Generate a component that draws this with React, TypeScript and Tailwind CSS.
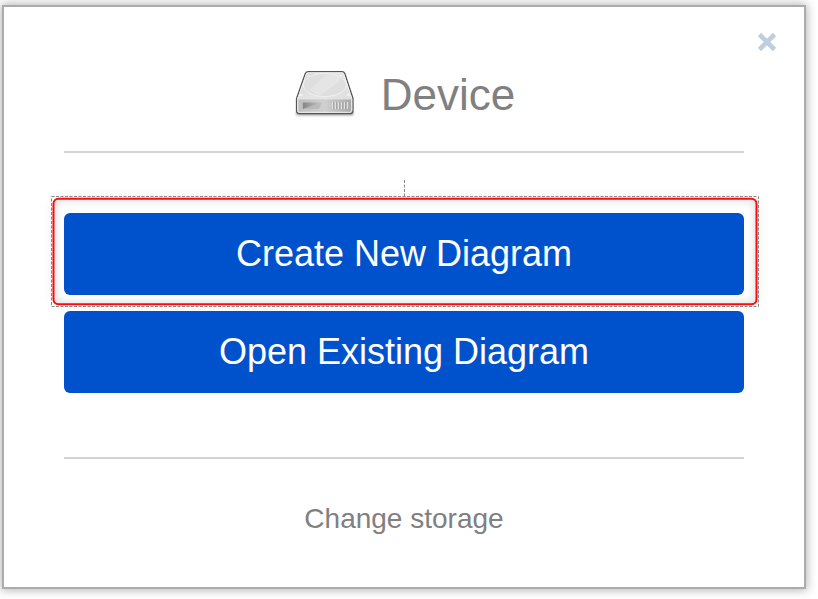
import type { ReactNode } from "react";

type StorageButtonProps = {
  children: ReactNode;
  highlighted?: boolean;
};

function DriveIcon() {
  return (
    <svg width="62" height="54" viewBox="-1.8 -1.5 62 54" fill="none">
      <defs>
        <linearGradient id="driveTop" x1="0" y1="0" x2="1" y2="1">
          <stop offset="0" stopColor="#d6d6d6" />
          <stop offset="0.5" stopColor="#e6e6e6" />
          <stop offset="1" stopColor="#d6d6d6" />
        </linearGradient>
        <linearGradient id="driveFront" x1="0" y1="0" x2="1" y2="0">
          <stop offset="0" stopColor="#bdbdbd" />
          <stop offset="0.5" stopColor="#d0d0d0" />
          <stop offset="1" stopColor="#a8a8a8" />
        </linearGradient>
        <linearGradient id="driveSlot" x1="0" y1="0" x2="1" y2="0">
          <stop offset="0" stopColor="#858585" />
          <stop offset="1" stopColor="#c8c8c8" />
        </linearGradient>
        <filter id="driveShadow" x="-10%" y="-100%" width="120%" height="300%">
          <feGaussianBlur stdDeviation="1.1" />
        </filter>
      </defs>
      <rect x="1" y="41" width="58" height="4" rx="2" fill="#000" opacity="0.35" filter="url(#driveShadow)" />
      <path
        d="M10.500 3Q11.200 1.200 13.500 1.200H47Q49.300 1.200 50 3L57.900 27Q58.200 28 58.200 29V40.200Q58.200 43 55.400 43H4.600Q1.700 43 1.700 40.200V29Q1.700 28 2.100 27Z"
        fill="url(#driveTop)"
        stroke="#555"
        strokeWidth="1.300"
      />
      <path d="M2.500 28.500H57.400V39.700Q57.400 42.300 54.800 42.300H5.100Q2.500 42.300 2.500 39.700Z" fill="url(#driveFront)" />
      <path
        d="M11.500 3.800Q12 2.400 13.700 2.400H46.800Q48.500 2.400 49 3.800L56.900 28V39.700Q56.900 41.800 54.900 41.800H5Q3 41.800 3 39.700V28Z"
        stroke="#f0f0f0"
        strokeWidth="1"
      />
      <path d="M3 28.500H57" stroke="#e6e6e6" strokeWidth="0.800" />
      <ellipse cx="30" cy="14.500" rx="21.500" ry="11.500" fill="#dedede" stroke="#f2f2f2" strokeWidth="0.900" />
      <path d="M15 19L32 4Q42 4 47 9L25 25Q18 23 15 19Z" fill="#ededed" opacity="0.450" />
      <g fill="#f0f0f0">
        <circle cx="13.500" cy="5" r="0.900" />
        <circle cx="46.500" cy="5" r="0.900" />
        <ellipse cx="6.500" cy="24.500" rx="1.800" ry="1.300" />
        <ellipse cx="53.500" cy="24.500" rx="1.800" ry="1.300" />
      </g>
      <path d="M8 32H27L8 38.500Z" fill="url(#driveSlot)" />
      <path d="M27 32L8 38.500H24Z" fill="#a9a9a9" opacity="0.450" />
      <path d="M37.700 31.500V38.500M40.700 31.500V38.500M43.700 31.500V38.500M46.700 31.500V38.500M49.700 31.500V38.500M52.700 31.500V38.500" stroke="#e2e2e2" />
      <path d="M38.700 31.500V38.500M41.700 31.500V38.500M44.700 31.500V38.500M47.700 31.500V38.500M50.700 31.500V38.500" stroke="#a0a0a0" strokeWidth="0.800" />
    </svg>
  );
}

function CloseIcon() {
  return (
    <svg width="20" height="20" viewBox="0 0 20 20" fill="none">
      <path d="M2.500 2.500L17.500 17.500M17.500 2.500L2.500 17.500" stroke="#bfcede" strokeWidth="4.600" />
    </svg>
  );
}

/* Red frame with dashed outline and the connector line above it */
function Highlight() {
  return (
    <div className="pointer-events-none absolute -top-[17px] -right-[15px] -bottom-[12px] -left-[13px]">
      <div className="absolute inset-[2px] rounded-[6px] shadow-[0_0_12px_rgba(0,0,0,0.1),inset_0_0_8px_3px_rgba(0,0,0,0.13)]" />
      <svg className="absolute inset-0 h-full w-full overflow-visible" fill="none">
        <g stroke="#888" strokeDasharray="3 1.500">
          <rect x="0.500" y="0.500" width="707" height="110" />
          <path d="M353.500 -16V1" />
        </g>
        <rect x="2.500" y="2.700" width="703" height="105.600" rx="5" stroke="#ff0a0a" strokeWidth="2" />
      </svg>
    </div>
  );
}

function StorageButton({ children, highlighted }: StorageButtonProps) {
  return (
    <div className="relative">
      {highlighted && <Highlight />}
      <button className="relative block h-[82px] w-full rounded-[6px] bg-[#0052cc] text-center text-[36px] leading-[82px] text-white">
        {children}
      </button>
    </div>
  );
}

export default function App() {
  return (
    <div className="h-[599px] w-[818px] overflow-hidden bg-white pt-[5px] pl-[2px] font-['Liberation_Sans',Arial,sans-serif]">
      <div className="relative h-[584px] w-[804px] border-2 border-[#acacac] bg-white px-[60px] shadow-[0_0_9px_1px_rgba(0,0,0,0.3)]">
        <button className="absolute top-[25px] right-[27px]" aria-label="Close">
          <CloseIcon />
        </button>

        <header className="flex h-[146px] items-start justify-center gap-[26px] border-b-2 border-[#d3d3d3] pt-[62px]">
          <DriveIcon />
          <h1 className="text-[44px] leading-[52px] text-[#808080]">Device</h1>
        </header>

        <div className="flex flex-col gap-4 pt-[60px] pb-16">
          <StorageButton highlighted>Create New Diagram</StorageButton>
          <StorageButton>Open Existing Diagram</StorageButton>
        </div>

        <footer className="border-t-2 border-[#d3d3d3] pt-[44px] text-center">
          <button className="text-[28px] leading-[32px] text-[#808080]">Change storage</button>
        </footer>
      </div>
    </div>
  );
}
